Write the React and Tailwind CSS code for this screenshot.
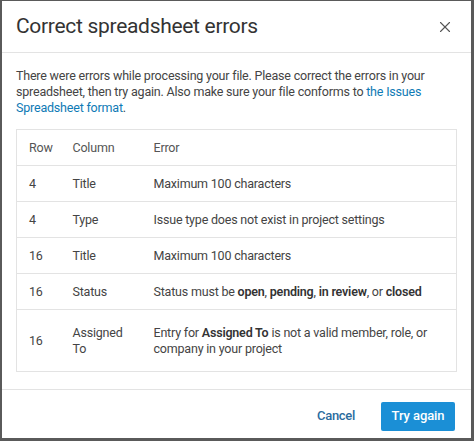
import { X } from "lucide-react";

const B = ({ children }) => <b className="font-semibold text-[#333]">{children}</b>;

const rows = [
  { row: "4", column: "Title", error: <>Maximum 100 characters</> },
  { row: "4", column: "Type", error: <>Issue type does not exist in project settings</> },
  { row: "16", column: "Title", error: <>Maximum 100 characters</> },
  {
    row: "16",
    column: "Status",
    error: (
      <>
        Status must be <B>open</B>, <B>pending</B>, <B>in review</B>, or <B>closed</B>
      </>
    ),
  },
  {
    row: "16",
    column: "Assigned To",
    error: (
      <>
        Entry for <B>Assigned To</B> is not a valid member, role, or company in your project
      </>
    ),
    tall: true,
  },
];

export default function App() {
  return (
    <div className="h-[441px] w-[474px] bg-[#5a5a5a] pl-[2px] pr-[3px] pt-[1px] pb-[3px] font-['Roboto',sans-serif]">
      <div className="flex h-full flex-col bg-white text-[#444]">
        {/* Header */}
        <div className="flex h-[52px] shrink-0 items-center justify-between border-b border-[#e3e3e3] pl-[14px] pr-[17px]">
          <h1 className="text-[21px] font-normal tracking-[-0.3px] text-[#333]">Correct spreadsheet errors</h1>
          <button className="text-[#555]">
            <X size={18} strokeWidth={1.5} />
          </button>
        </div>

        {/* Body */}
        <div className="flex-1 px-[14px] pt-[15px] text-[12.5px] leading-[16px] tracking-[-0.2px]">
          <p>
            There were errors while processing your file. Please correct the errors in your spreadsheet, then try again. Also make sure your file conforms to{" "}
            <a className="text-[#0e7ab5]">the Issues Spreadsheet format</a>.
          </p>

          <table className="mt-[13px] w-full table-fixed border border-[#e3e3e3] text-left">
            <colgroup>
              <col className="w-[56px]" />
              <col className="w-[81px]" />
              <col />
            </colgroup>
            <thead>
              <tr className="h-[36px] border-b border-[#e3e3e3]">
                <th className="pl-[12px] font-normal text-[#555]">Row</th>
                <th className="font-normal text-[#555]">Column</th>
                <th className="font-normal text-[#555]">Error</th>
              </tr>
            </thead>
            <tbody>
              {rows.map((r, i) => (
                <tr key={i} className={`border-b border-[#e3e3e3] last:border-b-0 ${r.tall ? "h-[62px]" : "h-[36px]"}`}>
                  <td className="pl-[12px] align-middle">{r.row}</td>
                  <td className="pr-[16px] align-middle">{r.column}</td>
                  <td className="pr-[12px] align-middle">{r.error}</td>
                </tr>
              ))}
            </tbody>
          </table>
        </div>

        {/* Footer */}
        <div className="flex h-[49px] shrink-0 items-center justify-end gap-[26px] border-t border-[#e3e3e3] pr-[16px] pt-[4px]">
          <button className="text-[13px] font-medium tracking-[-0.3px] text-[#2b6c9e]">Cancel</button>
          <button className="h-[29px] w-[74px] rounded-[2px] bg-[#1b8fd6] text-[13px] font-medium tracking-[-0.1px] text-white">Try again</button>
        </div>
      </div>
    </div>
  );
}
